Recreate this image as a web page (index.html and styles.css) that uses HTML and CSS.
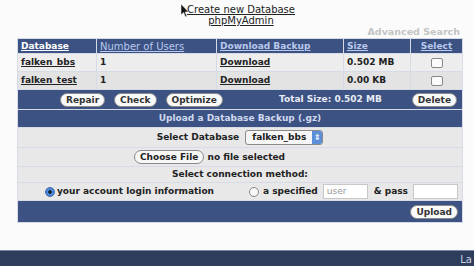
FILE: index.html
```html
<html>
<head>
<link rel="stylesheet" href="styles.css">
</head>
<body>

	<!--top links-->
	<div class="topLinks">
		<span class="cursor">
			<svg width="10" height="14" viewBox="0 0 10 14"><path d="M1 0 L1 11 L3.5 8.5 L5.5 13 L7 12.3 L5 8 L8.5 8 Z" fill="#111" stroke="#eee" stroke-width="0.6"/></svg>
		</span>
		<a href="#">Create new Database</a><br>
		<a href="#">phpMyAdmin</a>
	</div>
	<div class="advSearch"><a href="#">Advanced Search</a></div>

	<!--database table-->
	<table class="dbTable" cellspacing="1">
		<colgroup>
			<col style="width: 78px">
			<col style="width: 119px">
			<col style="width: 126px">
			<col style="width: 66px">
			<col>
		</colgroup>
		<tr class="dbHead">
			<th><a class="cur" href="#">Database</a></th>
			<th><a class="thin" href="#">Number of Users</a></th>
			<th><a href="#">Download Backup</a></th>
			<th><a href="#">Size</a></th>
			<th class="center"><a href="#">Select</a></th>
		</tr>
		<tr class="dbRow1">
			<td><a href="#">falken_bbs</a></td>
			<td>1</td>
			<td><a href="#">Download</a></td>
			<td>0.502 MB</td>
			<td class="center"><span class="check"></span></td>
		</tr>
		<tr class="dbRow2">
			<td><a href="#">falken_test</a></td>
			<td>1</td>
			<td><a href="#">Download</a></td>
			<td>0.00 KB</td>
			<td class="center"><span class="check"></span></td>
		</tr>
		<tr class="dbTools">
			<td colspan="5">
				<div class="toolLine">
					<span class="pill">Repair</span>
					<span class="pill">Check</span>
					<span class="pill">Optimize</span>
					<span class="total">Total Size: 0.502 MB</span>
					<span class="pill">Delete</span>
				</div>
			</td>
		</tr>
		<tr class="upHead">
			<td colspan="5">Upload a Database Backup (.gz)</td>
		</tr>
		<tr class="upRow rowSel">
			<td colspan="5">
				Select Database
				<span class="selectBox">falken_bbs<span class="arrows">&#8661;</span></span>
			</td>
		</tr>
		<tr class="upRow rowFile">
			<td colspan="5">
				<span class="fileBtn">Choose File</span> no file selected
			</td>
		</tr>
		<tr class="upRow rowMethod">
			<td colspan="5">Select connection method:</td>
		</tr>
		<tr class="upRow rowRadio">
			<td colspan="5">
				<div class="radioLine">
					<span class="radio on"></span><span class="lbl1">your account login information</span>
					<span class="radio"></span><span class="lbl2">a specified</span>
					<span class="inp">user</span>
					<span class="lbl3">&amp; pass</span>
					<span class="inp pass"></span>
				</div>
			</td>
		</tr>
		<tr class="upFoot">
			<td colspan="5"><span class="pill">Upload</span></td>
		</tr>
	</table>

	<div class="footer">La</div>

</body>
</html>
```

FILE: styles.css
```css
BODY {
	margin: 0;
	background-color: #fbfbfb;
	font-family: "DejaVu Sans", Verdana, sans-serif;
	font-size: 10px;
	color: #222;
	width: 474px;
	height: 266px;
	overflow: hidden;
}

A {
	color: #222;
}

.topLinks {
	position: relative;
	text-align: center;
	padding-top: 4px;
	padding-left: 8px;
	height: 23px;
	line-height: 11px;
}

.cursor {
	position: absolute;
	left: 180px;
	top: 4px;
}

.advSearch {
	text-align: right;
	padding-right: 14px;
	height: 11px;
	line-height: 10px;
	font-size: 9.5px;
	font-weight: bold;
}

.advSearch A {
	color: #c4c4c4;
	text-decoration: none;
}

TABLE.dbTable {
	margin-left: 17px;
	width: 446px;
	table-layout: fixed;
	background-color: #d6dbe6;
	border-spacing: 1px;
	font-family: "DejaVu Sans", Verdana, sans-serif;
	font-size: 9px;
	color: #222;
	line-height: 11px;
}

TABLE.dbTable TD, TABLE.dbTable TH {
	padding: 0 3px;
	white-space: nowrap;
	overflow: hidden;
}

.center {
	text-align: center;
}

TR.dbHead TH {
	height: 14px;
	background-color: #3c5283;
	text-align: left;
	font-weight: bold;
}

TR.dbHead TH.center {
	text-align: center;
}

TR.dbHead A {
	color: #b9c9ec;
}

TR.dbHead A.cur {
	color: #ffffff;
}

TR.dbHead A.thin {
	font-weight: normal;
	font-size: 10px;
}

TR.dbRow1 TD {
	height: 17px;
	background-color: #ededed;
	font-weight: bold;
}

TR.dbRow2 TD {
	height: 17px;
	background-color: #e3e3e3;
	font-weight: bold;
}

.check {
	display: inline-block;
	width: 10px;
	height: 8px;
	border: 1px solid #888;
	border-radius: 2px;
	background-color: #fbfbfb;
	vertical-align: middle;
}

TR.dbTools TD {
	height: 19px;
	background-color: #3c5283;
	padding: 0;
}

.toolLine {
	display: flex;
	align-items: center;
	padding-left: 42px;
	padding-right: 5px;
}

.toolLine .pill {
	margin: 0 9px 0 0;
}

.toolLine .pill:last-child {
	margin: 0;
}

.total {
	color: #e8ecf5;
	font-weight: bold;
	margin-left: auto;
	margin-right: 30px;
}

.pill {
	display: inline-block;
	background-color: #fafafa;
	border: 1px solid #8a8a8a;
	border-radius: 8px;
	color: #333;
	font-weight: bold;
	padding: 0 5px;
	height: 12px;
	line-height: 12px;
	vertical-align: middle;
}

TR.upHead TD {
	height: 17px;
	background-color: #3c5283;
	color: #cfd9ef;
	font-weight: bold;
	text-align: center;
}

TR.upRow TD {
	background-color: #e8e8e8;
	text-align: center;
	font-weight: bold;
}

TR.rowSel TD {
	height: 19px;
}

.selectBox {
	display: inline-block;
	width: 64px;
	height: 13px;
	line-height: 13px;
	border: 1px solid #8a8a8a;
	border-radius: 3px;
	background-color: #f6f6f6;
	padding-left: 6px;
	padding-right: 6px;
	margin-left: 3px;
	text-align: left;
	position: relative;
	vertical-align: middle;
}

.arrows {
	position: absolute;
	right: 0;
	top: 0;
	width: 10px;
	height: 13px;
	background-color: #5d8fd8;
	color: #fff;
	font-size: 8px;
	text-align: center;
	border-radius: 0 2px 2px 0;
}

TR.rowFile TD {
	height: 18px;
	padding-right: 64px;
}

.fileBtn {
	display: inline-block;
	border: 1px solid #8a8a8a;
	border-radius: 8px;
	background-color: #f7f7f7;
	padding: 0 5px;
	height: 12px;
	line-height: 12px;
	vertical-align: middle;
}

TR.rowMethod TD {
	height: 15px;
}

TR.rowRadio TD {
	height: 17px;
	text-align: left;
	padding: 0;
}

.radioLine {
	display: flex;
	align-items: center;
	padding-left: 27px;
}

.radio {
	display: inline-block;
	width: 10px;
	height: 10px;
	border: 1px solid #888;
	border-radius: 50%;
	background-color: #f8f8f8;
	box-sizing: border-box;
}

.radio.on {
	background: radial-gradient(circle, #123 0 1.5px, #4f88d6 2px);
	border-color: #3a64a8;
}

.lbl1 {
	margin-left: 2px;
	margin-right: 35px;
}

.lbl2 {
	margin-left: 4px;
}

.inp {
	display: inline-block;
	width: 40px;
	height: 13px;
	line-height: 13px;
	border: 1px solid #c8c8c8;
	background-color: #fff;
	color: #9a9a9a;
	font-weight: normal;
	padding-left: 3px;
	margin-left: 5px;
}

.lbl3 {
	margin-left: 6px;
}

TR.upFoot TD {
	height: 21px;
	background-color: #3c5283;
	text-align: right;
	padding-right: 4px;
}

.footer {
	margin-top: 27px;
	height: 18px;
	border-top: 1px solid #7688a8;
	background-color: #2f3d5c;
	color: #c9d2e4;
	text-align: right;
	line-height: 18px;
	padding-right: 2px;
}
```
